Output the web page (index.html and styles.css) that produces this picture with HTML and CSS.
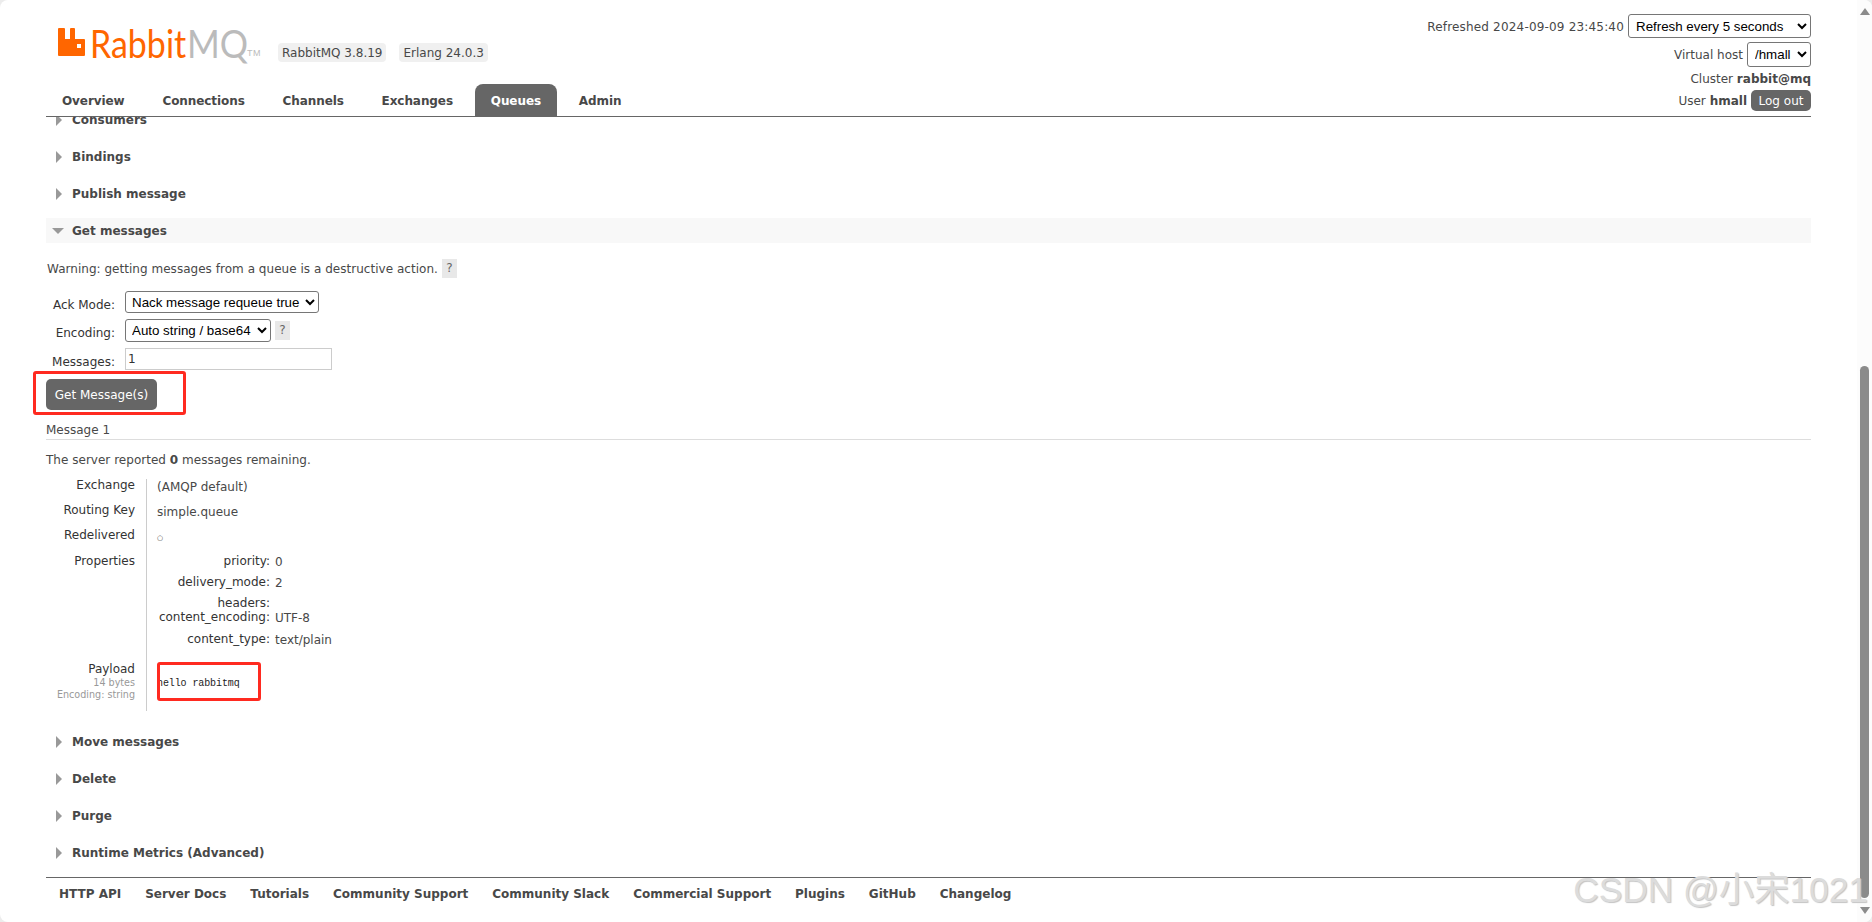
FILE: index.html
```html
<!DOCTYPE html>
<html lang="en">
<head>
<meta charset="utf-8">
<title>RabbitMQ Management</title>
<link rel="stylesheet" href="styles.css">
</head>
<body>
<div class="window">
  <div class="page">
    <header class="header">
      <div class="header-top">
        <div class="brand">
          <div class="logo">
            <svg class="logo-mark" width="27" height="28" viewBox="0 0 27 28"><path fill="#ff6600" fill-rule="evenodd" d="M1 0h5a1 1 0 0 1 1 1v10h5V1a1 1 0 0 1 1-1h3a1 1 0 0 1 1 1v10h9a1 1 0 0 1 1 1v15a1 1 0 0 1-1 1H1a1 1 0 0 1-1-1V1a1 1 0 0 1 1-1zM19 16h4v4h-4z"/></svg>
            <span class="logo-text"><span class="logo-rabbit">Rabbit</span><span class="logo-mq">MQ</span></span>
            <span class="logo-tm">TM</span>
          </div>
          <span class="version">RabbitMQ 3.8.19</span>
          <span class="version">Erlang 24.0.3</span>
        </div>
        <div class="status">
          <div class="status-row status-refresh">
            <span class="refreshed">Refreshed 2024-09-09 23:45:40</span>
            <select class="select select-refresh"><option>Refresh every 5 seconds</option></select>
          </div>
          <div class="status-row status-vhost">
            <span>Virtual host</span>
            <select class="select select-vhost"><option>/hmall</option></select>
          </div>
          <div class="status-row status-cluster"><span>Cluster <b>rabbit@mq</b></span></div>
          <div class="status-row status-user">
            <span>User <b>hmall</b></span>
            <button class="btn-logout" type="button">Log out</button>
          </div>
        </div>
      </div>
      <nav class="tabs">
        <a class="tab">Overview</a>
        <a class="tab">Connections</a>
        <a class="tab">Channels</a>
        <a class="tab">Exchanges</a>
        <a class="tab tab-active">Queues</a>
        <a class="tab">Admin</a>
      </nav>
    </header>

    <main class="main">
      <section class="section section-first"><h2 class="sec-head"><i class="tri"></i>Consumers</h2></section>
      <section class="section"><h2 class="sec-head"><i class="tri"></i>Bindings</h2></section>
      <section class="section"><h2 class="sec-head"><i class="tri"></i>Publish message</h2></section>
      <section class="section section-open">
        <h2 class="sec-head sec-head-open"><i class="tri-down"></i>Get messages</h2>
        <p class="warning">Warning: getting messages from a queue is a destructive action. <span class="help">?</span></p>
        <div class="form">
          <label class="form-label form-label-ack">Ack Mode:</label>
          <div class="form-field form-field-ack"><select class="select select-ack"><option>Nack message requeue true</option></select></div>
          <label class="form-label form-label-enc">Encoding:</label>
          <div class="form-field form-field-enc"><select class="select select-enc"><option>Auto string / base64</option></select><span class="help help-enc">?</span></div>
          <label class="form-label form-label-msg">Messages:</label>
          <div class="form-field form-field-msg"><input class="input" type="text" value="1"></div>
        </div>
        <div class="get-wrap">
          <button class="btn-get" type="button">Get Message(s)</button>
          <span class="mark mark-get"></span>
        </div>
        <div class="msg-title">Message 1</div>
        <p class="remaining">The server reported <b>0</b> messages remaining.</p>
        <div class="msg">
          <div class="msg-labels">
            <div class="lab lab-ex">Exchange</div>
            <div class="lab lab-rk">Routing Key</div>
            <div class="lab lab-re">Redelivered</div>
            <div class="lab lab-pr">Properties</div>
            <div class="lab lab-pa">Payload</div>
            <div class="sub">14 bytes</div>
            <div class="sub">Encoding: string</div>
          </div>
          <div class="msg-values">
            <div class="val val-ex">(AMQP default)</div>
            <div class="val val-rk">simple.queue</div>
            <div class="val val-re">○</div>
            <div class="props">
              <div class="pk pk-a">priority:</div><div class="pv pv-a">0</div>
              <div class="pk pk-b">delivery_mode:</div><div class="pv pv-b">2</div>
              <div class="pk pk-c">headers:</div><div class="pv pv-c"></div>
              <div class="pk pk-d">content_encoding:</div><div class="pv pv-d">UTF-8</div>
              <div class="pk pk-e">content_type:</div><div class="pv pv-e">text/plain</div>
            </div>
            <div class="payload">
              <pre class="payload-text">hello rabbitmq</pre>
              <span class="mark mark-payload"></span>
            </div>
          </div>
        </div>
      </section>
      <section class="section"><h2 class="sec-head"><i class="tri"></i>Move messages</h2></section>
      <section class="section"><h2 class="sec-head"><i class="tri"></i>Delete</h2></section>
      <section class="section"><h2 class="sec-head"><i class="tri"></i>Purge</h2></section>
      <section class="section"><h2 class="sec-head"><i class="tri"></i>Runtime Metrics (Advanced)</h2></section>
    </main>

    <footer class="footer">
      <a class="foot-link">HTTP API</a>
      <a class="foot-link">Server Docs</a>
      <a class="foot-link">Tutorials</a>
      <a class="foot-link">Community Support</a>
      <a class="foot-link">Community Slack</a>
      <a class="foot-link">Commercial Support</a>
      <a class="foot-link">Plugins</a>
      <a class="foot-link">GitHub</a>
      <a class="foot-link">Changelog</a>
    </footer>
  </div>

  <aside class="scrollbar">
    <i class="sb-up"></i>
    <div class="sb-track"><div class="sb-thumb"></div></div>
    <i class="sb-down"></i>
  </aside>

  <div class="watermark">CSDN @小宋1021</div>
</div>
</body>
</html>
```

FILE: styles.css
```css
* { box-sizing: border-box; }
html, body { margin: 0; height: 100%; overflow: hidden; }
body { background: #ececec; font: 12px "DejaVu Sans", Verdana, sans-serif; color: #484848; }

.window { position: relative; display: flex; width: 1872px; height: 922px; background: #fff; border-radius: 8px; overflow: hidden; }
.page { flex: 1; min-width: 0; display: flex; flex-direction: column; padding: 0 46px; }

/* header */
.header { height: 117px; flex: none; border-bottom: 1px solid #666; position: relative; z-index: 1; background: #fff; display: flex; flex-direction: column; }
.header-top { height: 84px; display: flex; justify-content: space-between; }
.brand { display: flex; align-items: flex-start; padding: 28px 0 0 12px; }
.logo { display: flex; align-items: flex-start; height: 30px; }
.logo-mark { flex: none; margin-right: 5px; }
.logo-text { font: 400 38px/30px Lato, sans-serif; display: flex; width: 153px; white-space: nowrap; }
.logo-rabbit { display: block; width: 97px; color: #ff6600; transform: scaleX(.893); transform-origin: left top; }
.logo-mq { display: block; width: 56px; color: #bbb; transform: scaleX(.93); transform-origin: left top; }
.logo-tm { font: 9px/10px "Liberation Sans", sans-serif; color: #bbb; margin: 20px 0 0 4px; letter-spacing: .5px; }
.version { background: #f0f0f0; border-radius: 4px; padding: 0 4px; height: 19px; line-height: 20px; margin: 15px 0 0 13px; font-size: 12px; color: #484848; white-space: nowrap; }
.logo + .version { margin-left: 17px; }

.status { display: flex; flex-direction: column; align-items: flex-end; padding-top: 14px; }
.status-row { display: flex; align-items: center; gap: 4px; white-space: nowrap; }
.status-refresh { height: 24px; }
.refreshed { letter-spacing: .18px; padding-top: 2px; }
.status-vhost { height: 25px; margin-top: 4px; }
.status-cluster { height: 16px; margin-top: 5px; }
.status-user { height: 21px; margin-top: 4px; }
.status b, .remaining b { font-weight: 700; }

.select { font: 13.33px "Liberation Sans", Arial, sans-serif; color: #000; background: #fff; border: 1px solid #767676; border-radius: 3px; padding: 0 0 0 3px; margin: 0; }
.select-refresh { width: 183px; height: 24px; }
.select-vhost { width: 64px; height: 25px; }
.select-ack { width: 194px; height: 22px; padding-left: 2px; }
.select-enc { width: 146px; height: 23px; padding-left: 2px; }

.btn-logout { height: 21px; width: 60px; padding: 0; background: #666; color: #fff; border: 0; border-radius: 5px; font: 12px "DejaVu Sans", Verdana, sans-serif; }

.tabs { display: flex; height: 32px; gap: 5.8px; }
.tab { padding: 1px 16px 0; line-height: 33px; font-weight: 700; letter-spacing: -.08px; color: #484848; border-radius: 8px 8px 0 0; white-space: nowrap; }
.tab-active { background: #666; color: #fff; }

/* sections */
.main { flex: 1; min-height: 0; overflow: hidden; margin: 0 -46px; padding: 0 46px; }
.section { margin-bottom: 12px; }
.section-first { margin-top: -10px; }
.section-open { margin-bottom: 18px; }
.sec-head { margin: 0; height: 25px; display: flex; align-items: center; font-size: 12px; font-weight: 700; color: #484848; }
.sec-head-open { background: #f8f8f8; }
.tri { width: 0; height: 0; border-left: 6px solid #999; border-top: 6px solid transparent; border-bottom: 6px solid transparent; margin: 0 10px 0 10px; flex: none; }
.tri-down { width: 0; height: 0; border-top: 6px solid #999; border-left: 6px solid transparent; border-right: 6px solid transparent; margin: 1px 8px 0 6px; flex: none; }

.warning { margin: 16px 0 0; height: 19px; display: flex; align-items: center; gap: 4px; padding-left: 1px; letter-spacing: .03px; }
.help { display: inline-block; width: 15px; height: 19px; line-height: 19px; background: #e8e8e8; text-align: center; font-size: 12px; color: #666; }

.form { margin-top: 13px; display: grid; grid-template-columns: 79px auto; grid-template-rows: 22px 23px 22px; row-gap: 6px; width: 300px; }
.form-label { color: #333; text-align: right; padding-right: 10px; align-self: end; line-height: 16px; white-space: nowrap; }
.form-label-enc { margin-bottom: 1px; }
.form-field { display: flex; align-items: center; gap: 4px; }
.input { width: 207px; height: 22px; border: 1px solid #ccc; padding: 0 2px; font: 12px "DejaVu Sans", Verdana, sans-serif; color: #333; background: #fff; outline: 0; }

.get-wrap { position: relative; width: 111px; margin-top: 9px; height: 31px; }
.btn-get { width: 111px; height: 31px; padding: 0; border: 0; border-radius: 5px; background: #666; color: #fff; font: 12px "DejaVu Sans", Verdana, sans-serif; }
.mark { position: absolute; border: 3px solid #ff2a20; border-radius: 3px; pointer-events: none; }
.mark-get { left: -13px; top: -8px; width: 153px; height: 44px; }

.msg-title { margin-top: 12px; line-height: 17px; border-bottom: 1px solid #ddd; height: 18px; }
.remaining { margin: 12px 0 0; line-height: 16px; height: 16px; letter-spacing: .02px; }

.msg { margin-top: 11px; height: 232px; display: flex; }
.msg-labels { width: 90px; flex: none; text-align: right; color: #333; padding-right: 1px; }
.lab { line-height: 16px; white-space: nowrap; }
.lab-ex { margin-top: -2px; }
.lab-rk { margin-top: 9px; }
.lab-re { margin-top: 9px; }
.lab-pr { margin-top: 10px; }
.lab-pa { margin-top: 92px; }
.sub { font-size: 9.6px; line-height: 12px; color: #999; white-space: nowrap; }
.msg-values { flex: 1; margin-left: 10px; border-left: 1px solid #ccc; padding-left: 10px; }
.val { line-height: 16px; }
.val-ex { margin-top: 0; }
.val-rk { margin-top: 9px; }
.val-re { margin-top: 10px; font-size: 7px; }
.props { margin-top: 7px; display: grid; grid-template-columns: 113px auto; column-gap: 5px; grid-template-rows: 21px 21px 14px 22px 22px; width: 240px; }
.pk { color: #333; text-align: right; line-height: 16px; white-space: nowrap; }
.pv { line-height: 16px; padding-top: 1px; }
.payload { position: relative; width: 100px; margin-top: 9px; height: 39px; }
.payload-text { margin: 0; padding: 13px 0 0 0; font: 10px/18px "Liberation Mono", monospace; color: #222; letter-spacing: -.1px; }
.mark-payload { left: 0; top: 0; width: 104px; height: 39px; }

/* footer */
.footer { flex: none; height: 45px; border-top: 1px solid #666; display: flex; gap: 23.95px; padding: 8px 0 0 13px; }
.foot-link { font-weight: 700; color: #484848; line-height: 16px; white-space: nowrap; }

/* scrollbar */
.scrollbar { width: 15px; flex: none; background: #fcfcfc; display: flex; flex-direction: column; align-items: center; }
.sb-up { margin-top: 8px; width: 0; height: 0; border-bottom: 7px solid #8b8b8b; border-left: 5px solid transparent; border-right: 5px solid transparent; }
.sb-track { flex: 1; width: 9px; display: flex; flex-direction: column; justify-content: flex-end; }
.sb-thumb { width: 9px; height: 532px; background: #8b8b8b; border-radius: 5px; }
.sb-down { margin: 9px 0 8px; width: 0; height: 0; border-top: 7px solid #8b8b8b; border-left: 5px solid transparent; border-right: 5px solid transparent; }

.watermark { position: absolute; right: 4px; top: 870px; font: 35.3px/40px "Liberation Sans", "Noto Sans CJK SC", sans-serif; color: #dcdcdc; text-shadow: 1px 1px 1px #c4c4c4; white-space: nowrap; }
```
